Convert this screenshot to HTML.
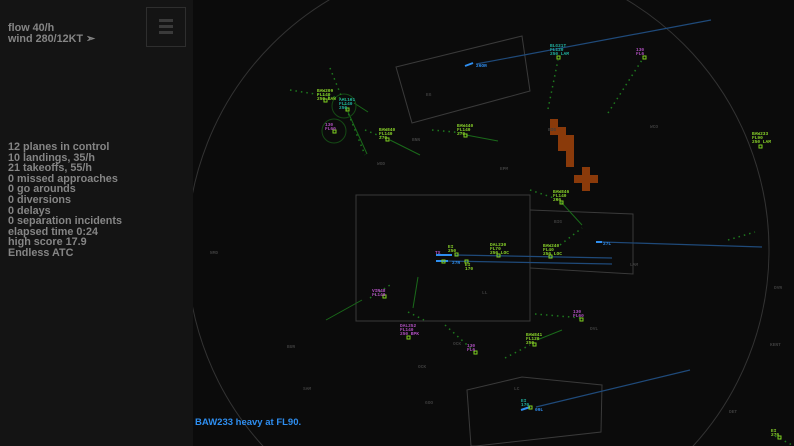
<!DOCTYPE html>
<html><head><meta charset="utf-8"><style>
html,body{margin:0;padding:0;width:794px;height:446px;overflow:hidden;background:#0b0b0b;font-family:"Liberation Sans",sans-serif}
#side{position:absolute;left:0;top:0;width:193px;height:446px;background:#141414;color:#858585;font-weight:bold;font-size:10.8px;line-height:10.6px}
#side .t{position:absolute;left:8px}
#menu{position:absolute;left:146px;top:7px;width:38px;height:38px;border:1px solid #2e2e2e}
#menu i{position:absolute;left:12px;width:14px;height:2.5px;background:#3a3a3a}
svg{position:absolute;left:0;top:0}
#msg{position:absolute;left:195px;top:417px;color:#2e8ef0;font-size:9.5px;font-weight:bold}
</style></head><body>
<svg width="794" height="446" viewBox="0 0 794 446">
<circle cx="478" cy="250" r="291" fill="none" stroke="#333" stroke-width="1"/>
<g fill="none" stroke="#3a3a3a" stroke-width="1">
<polygon points="396,67 522,36 530,91 412,123"/>
<polygon points="356,195 530,195 530,321 356,321"/>
<polyline points="530,210 633,214 633,274 530,268"/>
<polygon points="467,390 522,377 602,385 601,432 476,446 471,446"/>
</g>
<g fill="#8a3a0a">
<rect x="550" y="119" width="8" height="16"/><rect x="558" y="127" width="8" height="24"/><rect x="566" y="135" width="8" height="32"/>
<rect x="574" y="175" width="24" height="8"/><rect x="582" y="167" width="8" height="24"/>
</g>
<g stroke="#1f4a7a" stroke-width="1.2">
<line x1="476" y1="64" x2="711" y2="20"/>
<line x1="602" y1="242" x2="762" y2="247"/>
<line x1="455" y1="255" x2="612" y2="258"/>
<line x1="444" y1="261" x2="612" y2="264"/>
<line x1="536" y1="407" x2="690" y2="370"/>
</g>
<g stroke="#2e8ef0" stroke-width="2"><line x1="465" y1="66" x2="473" y2="63"/><line x1="436" y1="255" x2="452" y2="255"/><line x1="436" y1="261" x2="448" y2="261"/><line x1="596" y1="242" x2="602" y2="242"/><line x1="521" y1="410" x2="530" y2="407"/></g>
<g stroke="#1a6a1a" stroke-width="1" fill="none">
<line x1="354" y1="103" x2="368" y2="112"/><line x1="348" y1="112" x2="367" y2="154"/><line x1="390" y1="140" x2="420" y2="155"/><line x1="466" y1="135" x2="498" y2="141"/>
<line x1="561" y1="202" x2="582" y2="225"/><line x1="418" y1="277" x2="413" y2="308"/><line x1="326" y1="320" x2="362" y2="300"/><line x1="537" y1="340" x2="562" y2="330"/>
<circle cx="344" cy="106" r="12" stroke="#154a15"/><circle cx="334" cy="131" r="12" stroke="#154a15"/>
</g>
<g stroke="#1e7a1e" stroke-width="1.5" stroke-dasharray="1.5 4" fill="none">
<line x1="290" y1="90" x2="353" y2="100"/><line x1="330" y1="68" x2="365" y2="155"/><line x1="365" y1="130" x2="385" y2="138"/><line x1="432" y1="130" x2="464" y2="133"/>
<line x1="548" y1="109" x2="558" y2="60"/><line x1="608" y1="113" x2="642" y2="60"/><line x1="530" y1="190" x2="560" y2="200"/><line x1="560" y1="245" x2="582" y2="228"/>
<line x1="408" y1="312" x2="424" y2="320"/><line x1="370" y1="298" x2="390" y2="285"/><line x1="445" y1="325" x2="475" y2="352"/><line x1="505" y1="358" x2="530" y2="345"/><line x1="535" y1="314" x2="582" y2="318"/>
<line x1="728" y1="240" x2="755" y2="232"/><line x1="775" y1="436" x2="794" y2="446"/>
</g>
<g fill="none" stroke="#7fd020" stroke-width="1">
<rect x="324" y="99" width="3" height="3"/><rect x="346" y="108" width="3" height="3"/><rect x="333" y="130" width="3" height="3"/><rect x="386" y="138" width="3" height="3"/><rect x="464" y="134" width="3" height="3"/>
<rect x="557" y="56" width="3" height="3"/><rect x="643" y="56" width="3" height="3"/><rect x="560" y="201" width="3" height="3"/><rect x="407" y="336" width="3" height="3"/>
<rect x="455" y="253" width="3" height="3"/><rect x="497" y="254" width="3" height="3"/><rect x="549" y="255" width="3" height="3"/><rect x="465" y="260" width="3" height="3"/><rect x="442" y="260" width="3" height="3"/>
<rect x="383" y="295" width="3" height="3"/><rect x="580" y="318" width="3" height="3"/><rect x="474" y="351" width="3" height="3"/><rect x="533" y="343" width="3" height="3"/>
<rect x="759" y="145" width="3" height="3"/><rect x="529" y="406" width="3" height="3"/><rect x="778" y="436" width="3" height="3"/>
</g>
<g font-family="Liberation Mono,monospace" font-size="4.5" font-weight="bold">
<g fill="#8ad42a">
<text x="317" y="92">BAW209</text><text x="317" y="96">FL140</text><text x="317" y="100">250 BAW</text>
<text x="379" y="131">BAW840</text><text x="379" y="135">FL140</text><text x="379" y="139">270</text>
<text x="457" y="127">BAW440</text><text x="457" y="131">FL140</text><text x="457" y="135">270</text>
<text x="553" y="193">BAW846</text><text x="553" y="197">FL140</text><text x="553" y="201">260</text>
<text x="448" y="248">EI</text><text x="448" y="252">250</text>
<text x="490" y="246">DAL230</text><text x="490" y="250">FL70</text><text x="490" y="254">250 LOC</text>
<text x="543" y="247">BAW240</text><text x="543" y="251">FL40</text><text x="543" y="255">250 LOC</text>
<text x="465" y="266">EI</text><text x="465" y="270">170</text>
<text x="526" y="336">BAW841</text><text x="526" y="340">FL120</text><text x="526" y="344">250</text>
<text x="752" y="135">BAW233</text><text x="752" y="139">FL90</text><text x="752" y="143">250 LAM</text>
<text x="771" y="432">EI</text><text x="771" y="436">270</text>
</g>
<g fill="#20b0a0">
<text x="339" y="101">AAL101</text><text x="339" y="105">FL140</text><text x="339" y="109">250</text>
<text x="550" y="47">BLG21T</text><text x="550" y="51">FL120</text><text x="550" y="55">250 LAM</text>
<text x="521" y="402">EI</text><text x="521" y="406">170</text>
</g>
<g fill="#b050c0">
<text x="325" y="126">130</text><text x="325" y="130">FL60</text>
<text x="400" y="327">DAL252</text><text x="400" y="331">FL140</text><text x="400" y="335">250 BPK</text>
<text x="636" y="51">130</text><text x="636" y="55">FL6</text>
<text x="573" y="313">130</text><text x="573" y="317">FL60</text>
<text x="467" y="347">130</text><text x="467" y="351">FL6</text>
<text x="435" y="254">TX</text>
<text x="372" y="292">VIR48</text><text x="372" y="296">FL140</text>
</g>
<g fill="#2e8ef0"><text x="476" y="67">26OR</text><text x="603" y="245">27L</text><text x="535" y="411">09L</text><text x="452" y="264">27R</text></g>
<g fill="#3e3e3e">
<text x="426" y="96">EG</text><text x="412" y="141">BNN</text><text x="377" y="165">WOD</text><text x="500" y="170">EPM</text><text x="650" y="128">WCO</text><text x="630" y="266">LAM</text>
<text x="210" y="254">NMD</text><text x="554" y="223">BIG</text><text x="482" y="294">LL</text><text x="287" y="348">BUR</text><text x="303" y="390">SAM</text><text x="418" y="368">OCK</text>
<text x="453" y="345">OCK</text><text x="590" y="330">DVL</text><text x="425" y="404">GOO</text><text x="514" y="390">LC</text><text x="729" y="413">DET</text><text x="770" y="346">KENT</text><text x="774" y="289">DVR</text><text x="548" y="131">BIG</text>
</g>
</g>
</svg>
<div id="side">
<div class="t" style="top:23px">flow 40/h<br>wind 280/12KT ➣</div>
<div id="menu"><i style="top:11px"></i><i style="top:17px"></i><i style="top:23px"></i></div>
<div class="t" style="top:142px">12 planes in control<br>10 landings, 35/h<br>21 takeoffs, 55/h<br>0 missed approaches<br>0 go arounds<br>0 diversions<br>0 delays<br>0 separation incidents<br>elapsed time 0:24<br>high score 17.9<br>Endless ATC</div>
</div>
<div id="msg">BAW233 heavy at FL90.</div>
</body></html>
